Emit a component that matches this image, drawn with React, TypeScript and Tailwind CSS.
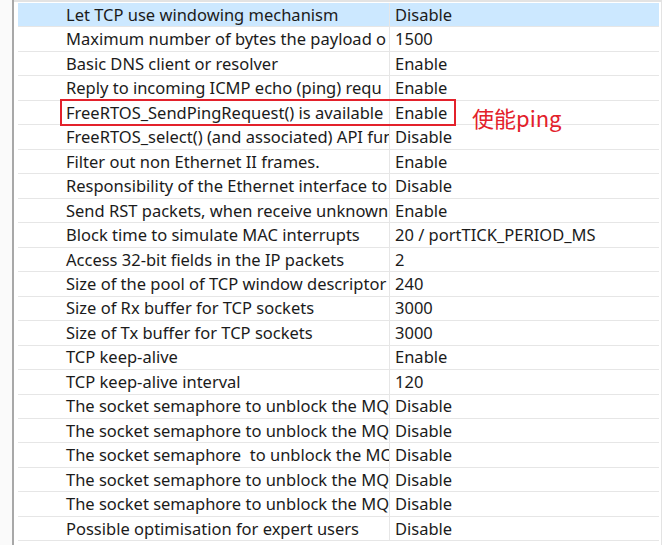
const rows: [string, string][] = [
  ['Let TCP use windowing mechanism', 'Disable'],
  ['Maximum number of bytes the payload o', '1500'],
  ['Basic DNS client or resolver', 'Enable'],
  ['Reply to incoming ICMP echo (ping) requ', 'Enable'],
  ['FreeRTOS_SendPingRequest() is available', 'Enable'],
  ['FreeRTOS_select() (and associated) API fun', 'Disable'],
  ['Filter out non Ethernet II frames.', 'Enable'],
  ['Responsibility of the Ethernet interface to', 'Disable'],
  ['Send RST packets, when receive unknown', 'Enable'],
  ['Block time to simulate MAC interrupts', '20 / portTICK_PERIOD_MS'],
  ['Access 32-bit fields in the IP packets', '2'],
  ['Size of the pool of TCP window descriptor', '240'],
  ['Size of Rx buffer for TCP sockets', '3000'],
  ['Size of Tx buffer for TCP sockets', '3000'],
  ['TCP keep-alive', 'Enable'],
  ['TCP keep-alive interval', '120'],
  ['The socket semaphore to unblock the MQ', 'Disable'],
  ['The socket semaphore to unblock the MQ', 'Disable'],
  ['The socket semaphore  to unblock the MC', 'Disable'],
  ['The socket semaphore to unblock the MQ', 'Disable'],
  ['The socket semaphore to unblock the MQ', 'Disable'],
  ['Possible optimisation for expert users', 'Disable']
]

export default function App() {
  return (
    <div className="relative w-[662px] h-[545px] overflow-hidden bg-white text-[#1b1b1b] font-['Noto_Sans','Noto_Sans_CJK_SC',sans-serif] text-[16.5px]">
      <div className="flex h-full">
        {/* 왼쪽 여백 + 세로 구분선 */}
        <div className="w-[12px] shrink-0 bg-[#fafafa]" />
        <div className="w-[2px] shrink-0 bg-[#a8a8a8]" />
        <div className="flex-1 flex flex-col min-w-0">
          <div className="h-[2px] bg-[#e3e3e3]" />
          <div className="flex-1 pt-[1px] pl-[4px] pr-[2px] border-r border-[#e3e3e3]">
            {rows.map(([name, value], i) => (
              <div
                key={i}
                className={
                  'grid grid-cols-[372px_1fr] h-[24.48px] border-b border-[#e6e6e6] ' +
                  (i === 0 ? 'bg-[#cce8ff]' : '')
                }
              >
                <div className="pl-[48px] pt-[1px] border-r border-[#e6e6e6] overflow-hidden whitespace-pre flex items-center">
                  {name}
                </div>
                <div className="pl-[5px] pt-[1px] overflow-hidden whitespace-nowrap flex items-center">{value}</div>
              </div>
            ))}
          </div>
        </div>
      </div>

      {/* 주석: 빨간 박스 + 라벨 */}
      <div className="absolute left-[60px] top-[99px] w-[396px] h-[27px] border-2 border-[#e3212b]" />
      <div className="absolute left-[472px] top-[102px] text-[22px] leading-[30px] text-[#e3212b] font-['Noto_Sans_CJK_SC','Noto_Sans',sans-serif]">
        使能ping
      </div>
    </div>
  )
}
